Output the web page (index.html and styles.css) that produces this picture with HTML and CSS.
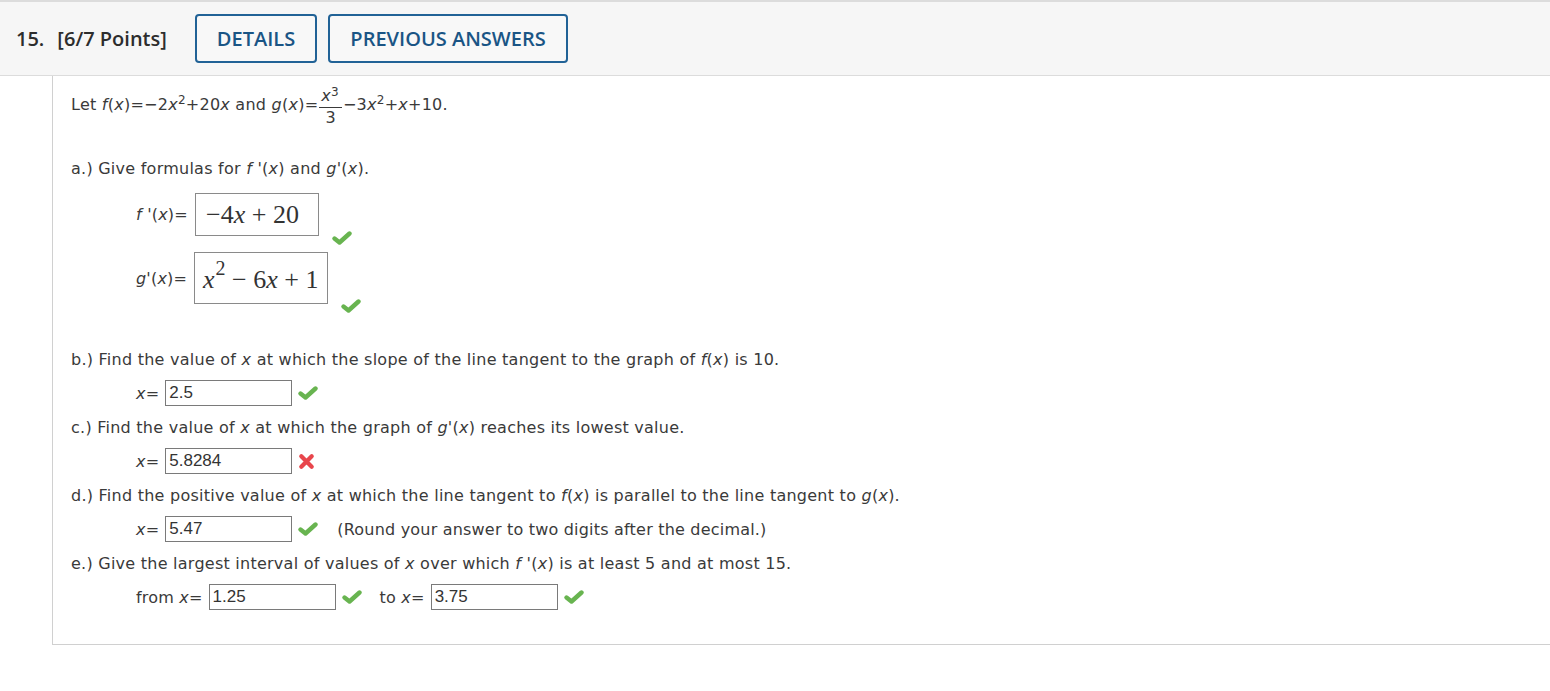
FILE: index.html
```html
<!DOCTYPE html>
<html>
<head>
<meta charset="utf-8">
<link rel="stylesheet" href="styles.css">
</head>
<body>
<div class="header">
  <div class="qnum"><span class="qn">15.</span>[6/7 Points]</div>
  <button class="btn btn-details">DETAILS</button>
  <button class="btn btn-prev">PREVIOUS ANSWERS</button>
</div>
<div class="content">
  <div class="line line-let">Let <i>f</i>(<i>x</i>)=&minus;2<i>x</i><sup>2</sup>+20<i>x</i> and <i>g</i>(<i>x</i>)=<span class="frac"><span class="num"><i>x</i><sup>3</sup></span><span class="den">3</span></span>&minus;3<i>x</i><sup>2</sup>+<i>x</i>+10.</div>

  <div class="line line-a">a.) Give formulas for <i>f</i> '(<i>x</i>) and <i>g</i>'(<i>x</i>).</div>

  <div class="mrow mrow-f">
    <span class="lbl"><i>f</i> '(<i>x</i>)=</span>
    <span class="mbox mbox-f">&minus;4<i>x</i> + 20</span>
    <svg class="ok ok-math" viewBox="0 0 20 14"><path d="M2.5 7.5 L7.5 11.5 L17.5 2.5" /></svg>
  </div>
  <div class="mrow mrow-g">
    <span class="lbl"><i>g</i>'(<i>x</i>)=</span>
    <span class="mbox mbox-g"><i>x</i><sup>2</sup> &minus; 6<i>x</i> + 1</span>
    <svg class="ok ok-math" viewBox="0 0 20 14"><path d="M2.5 7.5 L7.5 11.5 L17.5 2.5" /></svg>
  </div>

  <div class="line line-b">b.) Find the value of <i>x</i> at which the slope of the line tangent to the graph of <i>f</i>(<i>x</i>) is 10.</div>
  <div class="arow">
    <span class="albl"><i>x</i>=</span>
    <span class="inp">2.5</span>
    <svg class="ok" viewBox="0 0 20 14"><path d="M2.5 7.5 L7.5 11.5 L17.5 2.5" /></svg>
  </div>

  <div class="line">c.) Find the value of <i>x</i> at which the graph of <i>g</i>'(<i>x</i>) reaches its lowest value.</div>
  <div class="arow">
    <span class="albl"><i>x</i>=</span>
    <span class="inp">5.8284</span>
    <svg class="bad" viewBox="0 0 18 18"><path d="M3.5 3.5 L14.5 14.5 M14.5 3.5 L3.5 14.5" /></svg>
  </div>

  <div class="line">d.) Find the positive value of <i>x</i> at which the line tangent to <i>f</i>(<i>x</i>) is parallel to the line tangent to <i>g</i>(<i>x</i>).</div>
  <div class="arow">
    <span class="albl"><i>x</i>=</span>
    <span class="inp">5.47</span>
    <svg class="ok" viewBox="0 0 20 14"><path d="M2.5 7.5 L7.5 11.5 L17.5 2.5" /></svg>
    <span class="note">(Round your answer to two digits after the decimal.)</span>
  </div>

  <div class="line">e.) Give the largest interval of values of <i>x</i> over which <i>f</i> '(<i>x</i>) is at least 5 and at most 15.</div>
  <div class="arow">
    <span class="albl">from <i>x</i>=</span>
    <span class="inp">1.25</span>
    <svg class="ok" viewBox="0 0 20 14"><path d="M2.5 7.5 L7.5 11.5 L17.5 2.5" /></svg>
    <span class="albl2">to <i>x</i>=</span>
    <span class="inp">3.75</span>
    <svg class="ok" viewBox="0 0 20 14"><path d="M2.5 7.5 L7.5 11.5 L17.5 2.5" /></svg>
  </div>
</div>
</body>
</html>
```

FILE: styles.css
```css
html, body {
  margin: 0;
  padding: 0;
  background: #fff;
}
body {
  font-family: "DejaVu Sans", Verdana, sans-serif;
  color: #3a3a3a;
}
.header {
  height: 73px;
  background: #f6f6f6;
  border-top: 2px solid #dcdcdc;
  border-bottom: 1px solid #dcdcdc;
  display: flex;
  align-items: center;
  padding-left: 16px;
}
.qnum {
  font-family: "Open Sans", sans-serif;
  font-weight: 600;
  font-size: 20px;
  color: #2d2d2d;
  width: 179px;
  white-space: nowrap;
}
.qn { margin-right: 13px; }
.btn {
  font-family: "Open Sans", sans-serif;
  font-size: 20px;
  font-weight: 600;
  color: #1a5585;
  background: #f8f8f8;
  border: 2px solid #216296;
  border-radius: 4px;
  height: 49px;
  padding: 0;
  margin-right: 11px;
}
.btn-details { width: 122px; }
.btn-prev { width: 240px; }

.content {
  margin-left: 52px;
  border-left: 1px solid #d0d0d0;
  border-bottom: 1px solid #d0d0d0;
  height: 569px;
  padding-left: 18px;
  box-sizing: border-box;
  padding-top: 1px;
}
.line {
  font-size: 16px;
  letter-spacing: 0.25px;
  line-height: 20px;
  height: 20px;
  margin-top: 12px;
  white-space: nowrap;
}
.line i { font-style: italic; }
sup {
  font-size: 12px;
  vertical-align: 0;
  position: relative;
  top: -6px;
}
.line-let {
  margin-top: 8px;
  height: 40px;
  line-height: 40px;
}
.frac {
  display: inline-flex;
  flex-direction: column;
  align-items: center;
  vertical-align: middle;
  line-height: 15px;
  position: relative;
  top: 1px;
  margin: 0 1px;
}
.frac .num {
  border-bottom: 1px solid #3a3a3a;
  padding: 0 3px 2px 2px;
  line-height: 15px;
}
.frac .num sup { top: -5px; }
.frac .den {
  padding-top: 2px;
}
.line-a { margin-top: 34px; }

.mrow {
  display: flex;
  align-items: center;
  margin-left: 65px;
  font-size: 16px;
  letter-spacing: 0.2px;
  position: relative;
}
.lbl {
  width: 59px;
  flex: none;
  white-space: nowrap;
}
.mrow-f { margin-top: 14px; height: 43px; }
.mrow-g { margin-top: 16px; height: 52px; }
.mrow-g .lbl { width: 58px; }
.mbox {
  font-family: "Liberation Serif", "DejaVu Serif", serif;
  font-size: 26px;
  letter-spacing: 0;
  color: #333;
  border: 1px solid #8a8a8a;
  box-sizing: border-box;
  display: flex;
  align-items: center;
  white-space: pre;
}
.mbox i { font-style: italic; }
.mbox-f { width: 124px; height: 43px; padding-left: 10px; }
.mbox-g { width: 134px; height: 52px; padding-left: 8px; padding-top: 4px; }
.mbox-g sup {
  font-size: 20px;
  top: -12px;
  margin-left: 1px;
}
.ok, .bad {
  width: 20px;
  height: 14px;
  flex: none;
}
.ok path {
  fill: none;
  stroke: #68b450;
  stroke-width: 4.4;
  stroke-linecap: round;
  stroke-linejoin: round;
}
.bad { width: 18px; height: 18px; }
.bad path {
  fill: none;
  stroke: #e8464c;
  stroke-width: 4.5;
  stroke-linecap: round;
}
.ok-math {
  align-self: flex-end;
  margin-left: 13px;
  margin-bottom: -9px;
}

.line-b { margin-top: 46px; }
.arow {
  display: flex;
  align-items: center;
  margin-left: 65px;
  margin-top: 10px;
  height: 26px;
  font-size: 16px;
  letter-spacing: 0.2px;
  white-space: nowrap;
}
.albl { margin-right: 6px; }
.albl i, .albl2 i { font-style: italic; }
.inp {
  font-family: "Liberation Sans", Arial, sans-serif;
  font-size: 17px;
  letter-spacing: 0;
  color: #333;
  width: 127px;
  height: 26px;
  box-sizing: border-box;
  border: 1px solid #7a7a7a;
  padding-left: 3px;
  line-height: 24px;
  flex: none;
}
.arow .ok { margin-left: 6px; }
.arow .bad { margin-left: 6px; width: 17px; height: 17px; }
.note { margin-left: 19px; }
.albl2 { margin-left: 18px; margin-right: 6px; }
```
